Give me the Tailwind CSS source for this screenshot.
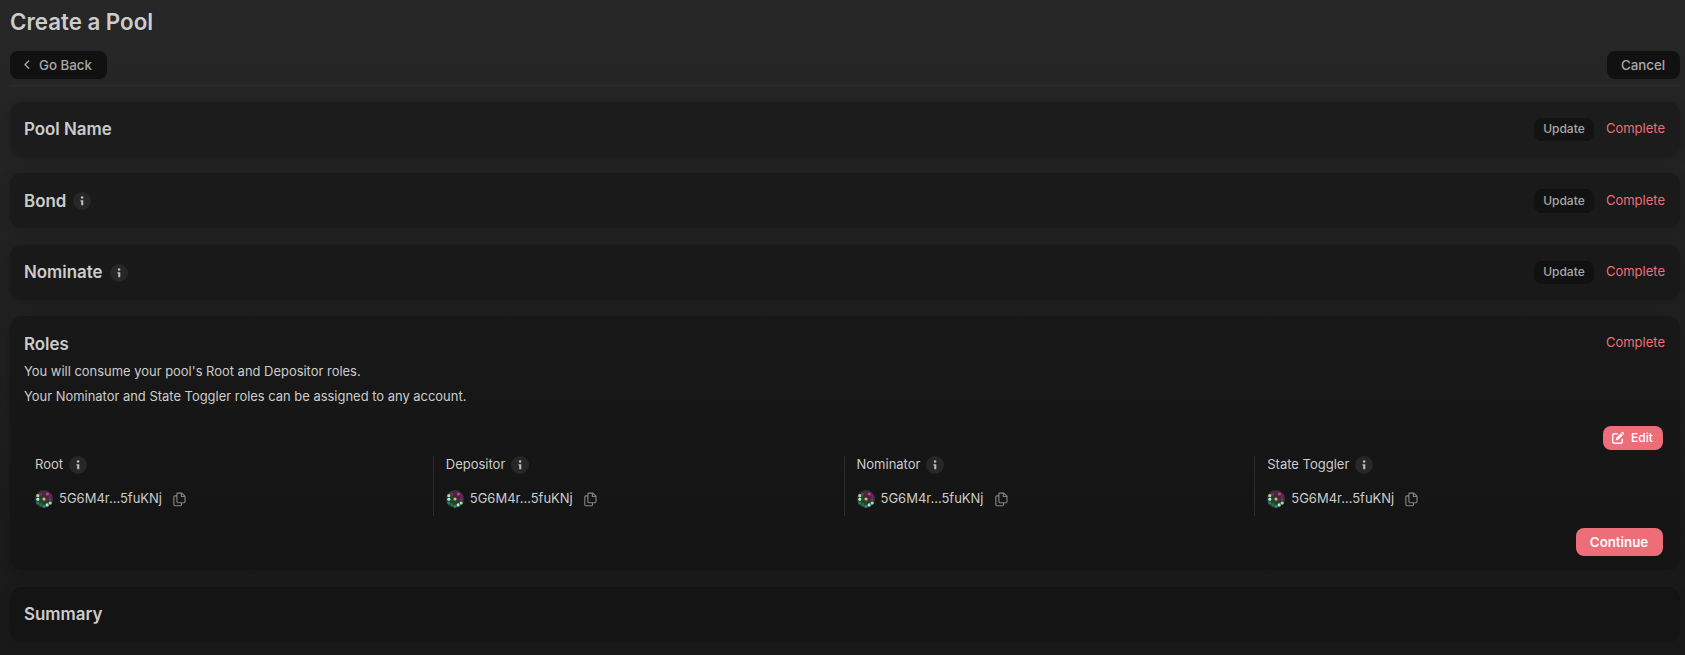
<!DOCTYPE html>
<html lang="en">

<head>
  <meta charset="UTF-8">
  <meta name="viewport" content="width=device-width, initial-scale=1.0">
  <title>Create a Pool</title>
  <script src="https://cdn.jsdelivr.net/npm/@tailwindcss/browser@4"></script>
</head>

<body class="h-[655px] overflow-hidden bg-linear-to-b from-[#272727] to-[#191919] font-['Inter',sans-serif] text-[#cccccc]">

  <!-- Shared icons -->
  <svg class="hidden">
    <symbol id="icon-info" viewBox="0 0 18 18">
      <circle cx="9" cy="9" r="9" fill="#272727" />
      <circle cx="9.1" cy="5.6" r="1.25" fill="#bcbcbc" />
      <path d="M7.4 8.2h2.900v5H8.200V9.600h-.8z" fill="#bcbcbc" />
    </symbol>
    <symbol id="icon-copy" viewBox="0 0 14 16">
      <path d="M5.2 1.1h4.3l3.4 3.2v6.2a1 1 0 0 1-1 1H5.2a1 1 0 0 1-1-1V2.100a1 1 0 0 1 1-1zM9 1.300v3.400h3.600M4 4.100H1.900a1 1 0 0 0-1 1v8.600a1 1 0 0 0 1 1h6.300a1 1 0 0 0 1-1v-2" fill="none" stroke="#858585" stroke-width="1.200" stroke-linejoin="round" />
    </symbol>
    <symbol id="icon-account" viewBox="0 0 64 64">
      <circle cx="32" cy="32" r="32" fill="#353535" />
      <circle cx="32" cy="20" r="5" fill="#5a1848" />
      <circle cx="21" cy="26" r="5" fill="#1d4a1d" />
      <circle cx="43" cy="26" r="5" fill="#5a1848" />
      <circle cx="21" cy="38" r="5" fill="#174d17" />
      <circle cx="43" cy="38" r="5" fill="#174d17" />
      <circle cx="32" cy="44" r="5" fill="#174d17" />
      <circle cx="20" cy="14" r="5.500" fill="#8c1e74" />
      <circle cx="44" cy="14" r="5.500" fill="#d8329c" />
      <circle cx="54" cy="20" r="5.500" fill="#7c1c68" />
      <circle cx="54" cy="33" r="5.500" fill="#8c1e74" />
      <circle cx="10" cy="20" r="5.500" fill="#9be88c" />
      <circle cx="10" cy="33" r="5.500" fill="#a5f0e4" />
      <circle cx="10" cy="46" r="5.500" fill="#21806e" />
      <circle cx="54" cy="46" r="5.500" fill="#9be88c" />
      <circle cx="21" cy="52" r="5.500" fill="#157a2a" />
      <circle cx="43" cy="53" r="5.500" fill="#a5f0e4" />
      <circle cx="32" cy="58" r="5.500" fill="#21907a" />
      <circle cx="32" cy="32" r="5.500" fill="#f5a08c" />
    </symbol>
  </svg>

  <header class="pl-[10px] pr-[5px]">
    <h1 class="pt-[7px] text-[22.300px] leading-[30px] font-semibold">Create a Pool</h1>
    <div class="mt-[14px] flex h-[35px] items-start justify-between border-b border-[#2c2c2c]">
      <button class="flex h-7 w-[97px] items-center rounded-lg bg-[#111111] pl-[14px] text-[13.300px] font-medium text-[#a8a8a8]">
        <svg class="mr-[9px] h-[10px] w-[6px]" viewBox="0 0 6 10" fill="none" stroke="currentColor" stroke-width="1.400" stroke-linecap="round" stroke-linejoin="round"><path d="M4.700 1 1 4.600l3.700 3.700" /></svg>
        <span class="pt-[2px]">Go Back</span>
      </button>
      <button class="h-7 w-[73px] rounded-lg bg-[#111111] pt-[2px] pr-[1px] text-[13.300px] font-medium text-[#a8a8a8]">Cancel</button>
    </div>
  </header>

  <main class="mt-4 flex flex-col gap-4 pl-[10px] pr-[5px]">

    <section class="flex h-[55px] items-center rounded-xl bg-[#1c1c1c] pl-[14px] pr-[15px] shadow-[0_2px_12px_rgba(0,0,0,0.2)]">
      <h2 class="text-[16.900px] font-semibold">Pool Name</h2>
      <button class="ml-auto h-[23px] w-[60px] rounded-lg bg-[#131313] pb-[2px] text-[12px] font-medium text-[#a8a8a8]">Update</button>
      <span class="ml-3 pb-[2px] text-[13px] text-[#ed6d78]">Complete</span>
    </section>

    <section class="flex h-[55px] items-center rounded-xl bg-[#1a1a1a] pl-[14px] pr-[15px] shadow-[0_2px_12px_rgba(0,0,0,0.2)]">
      <h2 class="pt-[2px] text-[16.900px] font-semibold">Bond</h2>
      <svg class="ml-[7px] size-[18px]"><use href="#icon-info" /></svg>
      <button class="ml-auto h-6 w-[60px] rounded-lg bg-[#121212] text-[12px] font-medium text-[#a8a8a8]">Update</button>
      <span class="ml-3 text-[13px] text-[#ed6d78]">Complete</span>
    </section>

    <section class="mt-[1px] flex h-[55px] items-center rounded-xl bg-[#191919] pl-[14px] pr-[15px] shadow-[0_2px_12px_rgba(0,0,0,0.2)]">
      <h2 class="text-[16.900px] font-semibold">Nominate</h2>
      <svg class="ml-[7px] size-[18px]"><use href="#icon-info" /></svg>
      <button class="ml-auto h-[23px] w-[60px] rounded-lg bg-[#111111] pb-[2px] text-[12px] font-medium text-[#a8a8a8]">Update</button>
      <span class="ml-3 pb-[2px] text-[13px] text-[#ed6d78]">Complete</span>
    </section>

    <section class="h-[254px] rounded-xl bg-linear-to-b from-[#181818] to-[#141414] pl-[14px] pr-[15px] pt-[15px] shadow-[0_2px_12px_rgba(0,0,0,0.2)]">
      <div class="flex justify-between">
        <h2 class="text-[16.900px] leading-[27px] font-semibold">Roles</h2>
        <span class="text-[13px] leading-[22px] text-[#ed6d78]">Complete</span>
      </div>
      <p class="mt-[1px] text-[12.950px] leading-[25px]">You will consume your pool's Root and Depositor roles.</p>
      <p class="text-[12.950px] leading-[25px]">Your Nominator and State Toggler roles can be assigned to any account.</p>

      <div class="mt-[17px] flex justify-end pr-[2px]">
        <button class="flex h-6 w-[60px] items-center rounded-lg bg-[#ed6d78] pl-[9px] text-[12px] font-medium text-white">
          <svg class="mr-[7px] size-3 overflow-visible" viewBox="0 0 12 12"><path d="M5.200 1.800H2.200A1.500 1.500 0 0 0 .7 3.300v6.500a1.500 1.500 0 0 0 1.500 1.500h6.500a1.500 1.500 0 0 0 1.500-1.500V7.200" fill="none" stroke="#fff" stroke-width="1.400" stroke-linecap="round" /><path d="m8.700 1.200 2.100 2.100-4.500 4.500-2.700.7.700-2.700zM9.300.6l.5-.5a.8.8 0 0 1 1.100 0l1 1a.8.8 0 0 1 0 1.100l-.5.5z" fill="#fff" /></svg>
          Edit
        </button>
      </div>

      <div class="mt-[6px] -ml-[2px] grid h-[60px] w-[1643px] grid-cols-4 text-[13px]">
        <div class="pl-[13px]">
          <div class="flex h-[18px] items-center">Root<svg class="ml-[6px] size-[18px]"><use href="#icon-info" /></svg></div>
          <div class="mt-4 flex h-[18px] items-center">
            <svg class="size-[18px]"><use href="#icon-account" /></svg>
            <span class="ml-[6px]">5G6M4r...5fuKNj</span>
            <svg class="ml-[11px] h-[15px] w-[13px]"><use href="#icon-copy" /></svg>
          </div>
        </div>
        <div class="border-l border-[#2b2b2b] pl-3">
          <div class="flex h-[18px] items-center">Depositor<svg class="ml-[6px] size-[18px]"><use href="#icon-info" /></svg></div>
          <div class="mt-4 flex h-[18px] items-center">
            <svg class="size-[18px]"><use href="#icon-account" /></svg>
            <span class="ml-[6px]">5G6M4r...5fuKNj</span>
            <svg class="ml-[11px] h-[15px] w-[13px]"><use href="#icon-copy" /></svg>
          </div>
        </div>
        <div class="border-l border-[#2b2b2b] pl-3">
          <div class="flex h-[18px] items-center">Nominator<svg class="ml-[6px] size-[18px]"><use href="#icon-info" /></svg></div>
          <div class="mt-4 flex h-[18px] items-center">
            <svg class="size-[18px]"><use href="#icon-account" /></svg>
            <span class="ml-[6px]">5G6M4r...5fuKNj</span>
            <svg class="ml-[11px] h-[15px] w-[13px]"><use href="#icon-copy" /></svg>
          </div>
        </div>
        <div class="border-l border-[#2b2b2b] pl-3">
          <div class="flex h-[18px] items-center">State Toggler<svg class="ml-[6px] size-[18px]"><use href="#icon-info" /></svg></div>
          <div class="mt-4 flex h-[18px] items-center">
            <svg class="size-[18px]"><use href="#icon-account" /></svg>
            <span class="ml-[6px]">5G6M4r...5fuKNj</span>
            <svg class="ml-[11px] h-[15px] w-[13px]"><use href="#icon-copy" /></svg>
          </div>
        </div>
      </div>

      <div class="mt-3 flex justify-end pr-[2px]">
        <button class="h-7 w-[87px] rounded-lg bg-[#ed6d78] pt-[2px] pr-[1px] text-[13.300px] font-semibold text-white">Continue</button>
      </div>
    </section>

    <section class="mt-[1px] flex h-[55px] items-center rounded-xl bg-[#141414] pl-[14px] pr-[15px] shadow-[0_2px_12px_rgba(0,0,0,0.1)]">
      <h2 class="text-[16.900px] font-semibold">Summary</h2>
    </section>

  </main>
</body>

</html>
